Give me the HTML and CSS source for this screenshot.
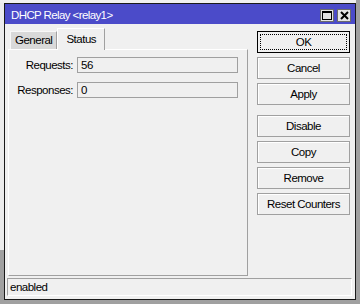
FILE: index.html
```html
<!DOCTYPE html>
<html>
<head>
<meta charset="utf-8">
<link rel="stylesheet" href="styles.css">
</head>
<body>
<div class="window">
  <div class="titlebar">
    <span class="title">DHCP Relay &lt;relay1&gt;</span>
    <div class="tbtns">
      <span class="tbtn"><svg width="10" height="9" viewBox="0 0 10 9"><rect x="0.5" y="0.5" width="9" height="8" fill="none" stroke="#000"/><rect x="0.5" y="0.5" width="9" height="1.5" fill="#000"/></svg></span>
      <span class="tbtn"><svg width="9" height="9" viewBox="0 0 9 9"><path d="M1 1L8 8M8 1L1 8" stroke="#000" stroke-width="2"/></svg></span>
    </div>
  </div>
  <div class="body">
    <div class="main">
      <div class="tabs">
        <span class="tab">General</span>
        <span class="tab active">Status</span>
      </div>
      <div class="panel">
        <div class="row"><label>Requests:</label><div class="field">56</div></div>
        <div class="row"><label>Responses:</label><div class="field">0</div></div>
      </div>
    </div>
    <div class="side">
      <div class="group">
        <button class="btn default"><span class="focus">OK</span></button>
        <button class="btn">Cancel</button>
        <button class="btn">Apply</button>
      </div>
      <div class="group">
        <button class="btn">Disable</button>
        <button class="btn">Copy</button>
        <button class="btn">Remove</button>
        <button class="btn">Reset Counters</button>
      </div>
    </div>
  </div>
  <div class="status">enabled</div>
</div>
</body>
</html>
```
FILE: styles.css
```css
html, body { margin: 0; padding: 0; }
body {
  width: 360px;
  height: 304px;
  box-sizing: border-box;
  padding: 3px 4px 4px 4px;
  background:
    linear-gradient(#f0f0f0, #f0f0f0) left top / 356px 3px no-repeat,
    linear-gradient(#ececec, #ececec) left top / 4px 250px no-repeat,
    #a0a0a0;
  font-family: "Liberation Sans", Arial, sans-serif;
  font-size: 11.5px;
  letter-spacing: -0.5px;
  color: #000;
  overflow: hidden;
}
.window {
  width: 352px;
  height: 297px;
  box-sizing: border-box;
  border: 1px solid #1a1a1a;
  background: #f0f0f0;
  display: flex;
  flex-direction: column;
}
.titlebar {
  height: 20px;
  background: #4b4bc9;
  display: flex;
  align-items: center;
  justify-content: space-between;
  padding: 0 4px 0 6px;
  flex: none;
}
.title {
  color: #fff;
  font-size: 11.5px;
  letter-spacing: -0.6px;
  padding-top: 1px;
}
.tbtns { display: flex; gap: 3px; margin-top: 2px; }
.tbtn {
  width: 14px;
  height: 13px;
  box-sizing: border-box;
  background: #e4e4e4;
  border: 1px solid #6b6b6b;
  display: flex;
  align-items: center;
  justify-content: center;
}
.body {
  flex: 1;
  display: flex;
  padding: 3px 5px 0 3px;
  gap: 9px;
  min-height: 0;
}
.main {
  width: 240px;
  display: flex;
  flex-direction: column;
}
.tabs {
  display: flex;
  align-items: flex-end;
  height: 22px;
  flex: none;
  padding-left: 2px;
}
.tab {
  height: 18px;
  box-sizing: border-box;
  padding: 2px 4px 0 4px;
  background: #d9d9d9;
  border-top: 1px solid #f8f8f8;
  border-left: 1px solid #f8f8f8;
  border-right: 1px solid #a0a0a0;
}
.tab.active {
  height: 22px;
  background: #f0f0f0;
  padding: 4px 8px 0 8px;
  border-top: 1px solid #fff;
  border-left: 1px solid #fff;
  border-right: 1px solid #a0a0a0;
  margin-bottom: -1px;
  position: relative;
}
.panel {
  height: 227px;
  flex: none;
  box-sizing: border-box;
  border-top: 1px solid #fff;
  border-left: 1px solid #fff;
  border-right: 1px solid #a0a0a0;
  border-bottom: 1px solid #a0a0a0;
  padding: 7px 9px 0 0;
  display: flex;
  flex-direction: column;
  gap: 9px;
}
.row { display: flex; align-items: center; }
.row label {
  width: 64px;
  text-align: right;
  padding-right: 4px;
  flex: none;
}
.field {
  flex: 1;
  height: 16px;
  box-sizing: border-box;
  border: 1px solid #a0a0a0;
  padding: 0 3px;
  line-height: 14px;
}
.side {
  width: 93px;
  display: flex;
  flex-direction: column;
  gap: 10px;
  padding-top: 4px;
}
.group { display: flex; flex-direction: column; gap: 4px; }
.btn {
  height: 22px;
  box-sizing: border-box;
  border: 1px solid #a0a0a0;
  box-shadow: inset 1px 1px 0 #fff;
  background: #f0f0f0;
  font-family: inherit;
  font-size: 11.5px;
  letter-spacing: -0.5px;
  color: #000;
  padding: 0;
  margin: 0;
  display: flex;
  align-items: center;
  justify-content: center;
}
.btn.default {
  border: 1px solid #000;
  padding: 2px;
  box-shadow: none;
}
.focus {
  flex: 1;
  align-self: stretch;
  border: 1px dotted #000;
  display: flex;
  align-items: center;
  justify-content: center;
}
.status {
  flex: none;
  height: 18px;
  box-sizing: border-box;
  margin: 3px 3px 3px 2px;
  border-top: 1px solid #a0a0a0;
  border-left: 1px solid #a0a0a0;
  border-right: 1px solid #fff;
  border-bottom: 1px solid #fff;
  padding: 1px 2px;
  line-height: 15px;
}
```
